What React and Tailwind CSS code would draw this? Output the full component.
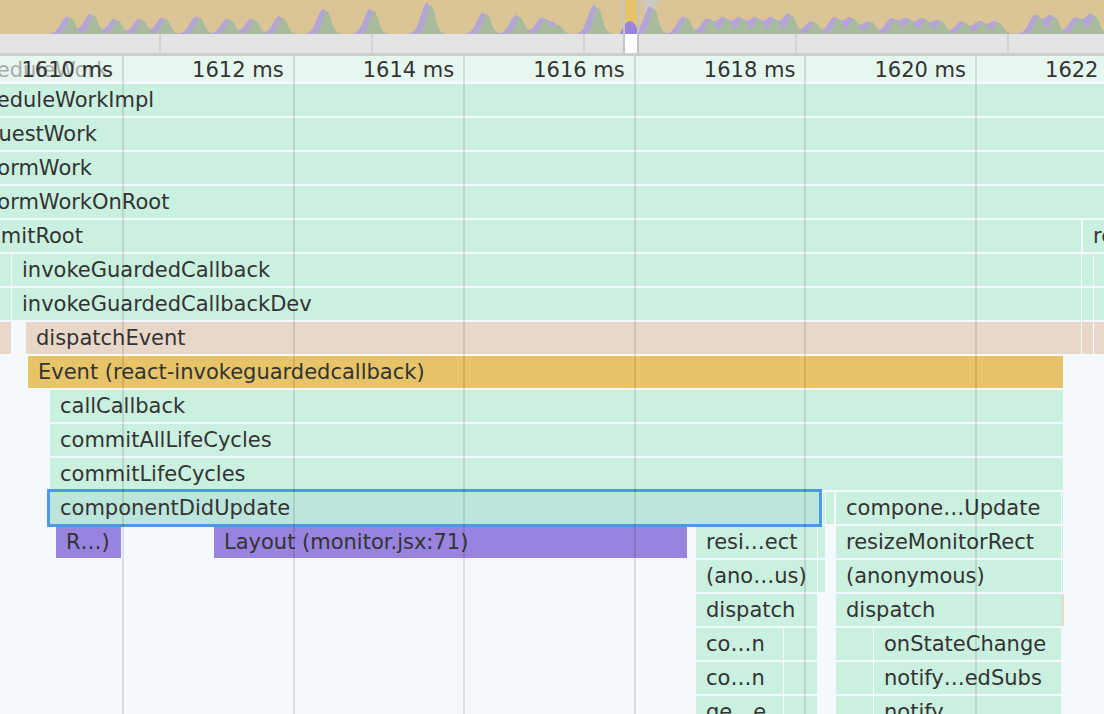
import React from 'react';

// flame chart rows: [start, end, label, kind]
const ROWS = [
  [[-49, 1104, 'scheduleWorkImpl', 'g']],
  [[-46, 1104, 'requestWork', 'g']],
  [[-55, 1104, 'performWork', 'g']],
  [[-55, 1104, 'performWorkOnRoot', 'g']],
  [[-54, 1081, 'commitRoot', 'g'], [1083, 1160, 'recomputeTimes', 'g']],
  [[0, 11, '', 'g'], [12, 1081, 'invokeGuardedCallback', 'g'], [1082, 1093, '', 'g'], [1094, 1104, '', 'g']],
  [[0, 11, '', 'g'], [12, 1081, 'invokeGuardedCallbackDev', 'g'], [1082, 1093, '', 'g'], [1094, 1104, '', 'g']],
  [[0, 11, '', 't'], [26, 1081, 'dispatchEvent', 't'], [1082, 1093, '', 't'], [1094, 1104, '', 't']],
  [[28, 1063, 'Event (react-invokeguardedcallback)', 'y']],
  [[50, 1063, 'callCallback', 'g']],
  [[50, 1063, 'commitAllLifeCycles', 'g']],
  [[50, 1063, 'commitLifeCycles', 'g']],
  [[50, 819, 'componentDidUpdate', 's'], [823, 825, '', 'g'], [826, 834, '', 'g'], [836, 1061, 'compone…Update', 'g'], [1062, 1063, '', 'g']],
  [[56, 121, 'R…)', 'p'], [214, 687, 'Layout (monitor.jsx:71)', 'p'], [696, 817, 'resi…ect', 'g'], [818, 825, '', 'g'], [836, 1061, 'resizeMonitorRect', 'g'], [1062, 1063, '', 'g']],
  [[696, 817, '(ano…us)', 'g'], [818, 825, '', 'g'], [836, 1061, '(anonymous)', 'g'], [1062, 1063, '', 'g']],
  [[696, 817, 'dispatch', 'g'], [836, 1062, 'dispatch', 'g'], [1062, 1064, '', 't']],
  [[696, 783, 'co…n', 'g'], [784, 817, '', 'g'], [836, 873, '', 'g'], [874, 1061, 'onStateChange', 'g']],
  [[696, 783, 'co…n', 'g'], [784, 817, '', 'g'], [836, 873, '', 'g'], [874, 1061, 'notify…edSubs', 'g']],
  [[696, 783, 'ge…e', 'g'], [784, 817, '', 'g'], [836, 873, '', 'g'], [874, 1061, 'notify', 'g']],
];

const KIND = {
  g: 'bg-[#caf0df]',
  t: 'bg-[#e8d8c9]',
  y: 'bg-[#e8c468]',
  p: 'bg-[#9883df]',
  s: 'bg-[#bce5dc] outline-[3px] outline-offset-0 outline-[#4a9ae9] relative z-10',
};

const GRID = [123, 293.6, 464.2, 634.8, 805.4, 976];
const LABELS = ['1610 ms', '1612 ms', '1614 ms', '1616 ms', '1618 ms', '1620 ms', '1622 ms'];
const STRIP = [159, 371, 583, 795, 1007];

const PEAKS = [
  [70, 14], [93, 16], [117, 12], [142, 12], [165, 13], [199, 14], [230, 12], [254, 12],
  [282, 14], [326, 20], [373, 20], [430, 25], [486, 17], [519, 15], [544, 12], [557, 8],
  [597, 23], [653, 22], [686, 14], [710, 12], [726, 13], [742, 13], [758, 13], [774, 13],
  [791, 16], [814, 10], [837, 13], [853, 13], [871, 10], [894, 12], [909, 12], [925, 12],
  [941, 11], [964, 10], [982, 10], [998, 10], [1038, 15], [1054, 15], [1078, 13], [1094, 16],
];

function areaPath(peaks, scale, shift, spread) {
  let d = 'M0 34';
  for (let x = 0; x <= 1104; x += 1) {
    let y = 0;
    peaks.forEach(([c, h]) => {
      y += h * scale * Math.exp(-(((x - c - shift) / spread) ** 2));
    });
    d += ` L${x} ${(34 - Math.min(y, 33)).toFixed(1)}`;
  }
  return d + ' L1104 34 Z';
}

const Overview = () => (
  <div className="relative h-[56px] shrink-0">
    <svg width="1104" height="34" className="block">
      <rect width="1104" height="34" fill="#dbc597" />
      <rect x="624" width="13" height="34" fill="#e8c468" />
      <path d="M642 0 L658 0 L652 24 L648 26 Z" fill="#cdc8c0" />
      <path d={areaPath(PEAKS, 1.25, -3, 8.5)} fill="#b3a6d7" />
      <path d={areaPath(PEAKS, 1.15, 1, 6)} fill="#a8bb9c" />
      <path d="M620 34 Q630 8 640 34 Z" fill="#9a84df" />
    </svg>
    <div className="relative h-[19px] bg-[#e4e4e4] border-b-[3px] border-[#cdcdcd] box-content">
      {STRIP.map((x) => (
        <div key={x} className="absolute top-0 h-full w-[2px] bg-[#d3d3d3]" style={{ left: x }} />
      ))}
      <div className="absolute top-0 left-[625px] h-full w-[12px] bg-white" />
    </div>
    <div className="absolute top-0 left-[623px] h-[53px] w-[2px] bg-[#c4c4c4]" />
    <div className="absolute top-0 left-[637px] h-[53px] w-[2px] bg-[#c4c4c4]" />
  </div>
);

const Ruler = () => (
  <div className="relative flex h-[25px] mb-[3px] bg-[#e5f7ef] overflow-hidden shrink-0 leading-[28px]">
    <span className="absolute left-[-39px] top-0 text-[#ababab]">scheduleWork</span>
    <div className="flex ml-[-47.6px]">
      {LABELS.map((label) => (
        <span key={label} className="relative w-[170.6px] shrink-0 pr-[10px] text-right text-[#333] whitespace-nowrap">
          {label}
        </span>
      ))}
    </div>
  </div>
);

const Row = ({ bars }) => {
  let prev = 0;
  return (
    <div className="flex h-[32px] shrink-0">
      {bars.map(([x1, x2, label, kind], i) => {
        const gap = x1 - prev;
        prev = x2;
        return (
          <div
            key={i}
            className={`h-full shrink-0 overflow-hidden whitespace-nowrap leading-[32px] text-[#333] ${label ? 'pl-[10px]' : ''} ${KIND[kind]}`}
            style={{ marginLeft: gap, width: x2 - x1 }}
          >
            {label}
          </div>
        );
      })}
    </div>
  );
};

export default function App() {
  return (
    <div className="relative w-[1104px] h-[714px] overflow-hidden bg-[#f5f8fd] font-['DejaVu_Sans',sans-serif] text-[21px]">
      <div className="flex flex-col">
        <Overview />
        <Ruler />
        <div className="flex flex-col gap-[2px]">
          {ROWS.map((bars, i) => (
            <Row key={i} bars={bars} />
          ))}
        </div>
      </div>
      {GRID.map((x) => (
        <div
          key={x}
          className="absolute top-[56px] bottom-0 w-[2px] bg-black/10 pointer-events-none z-20"
          style={{ left: x - 1 }}
        />
      ))}
    </div>
  );
}
